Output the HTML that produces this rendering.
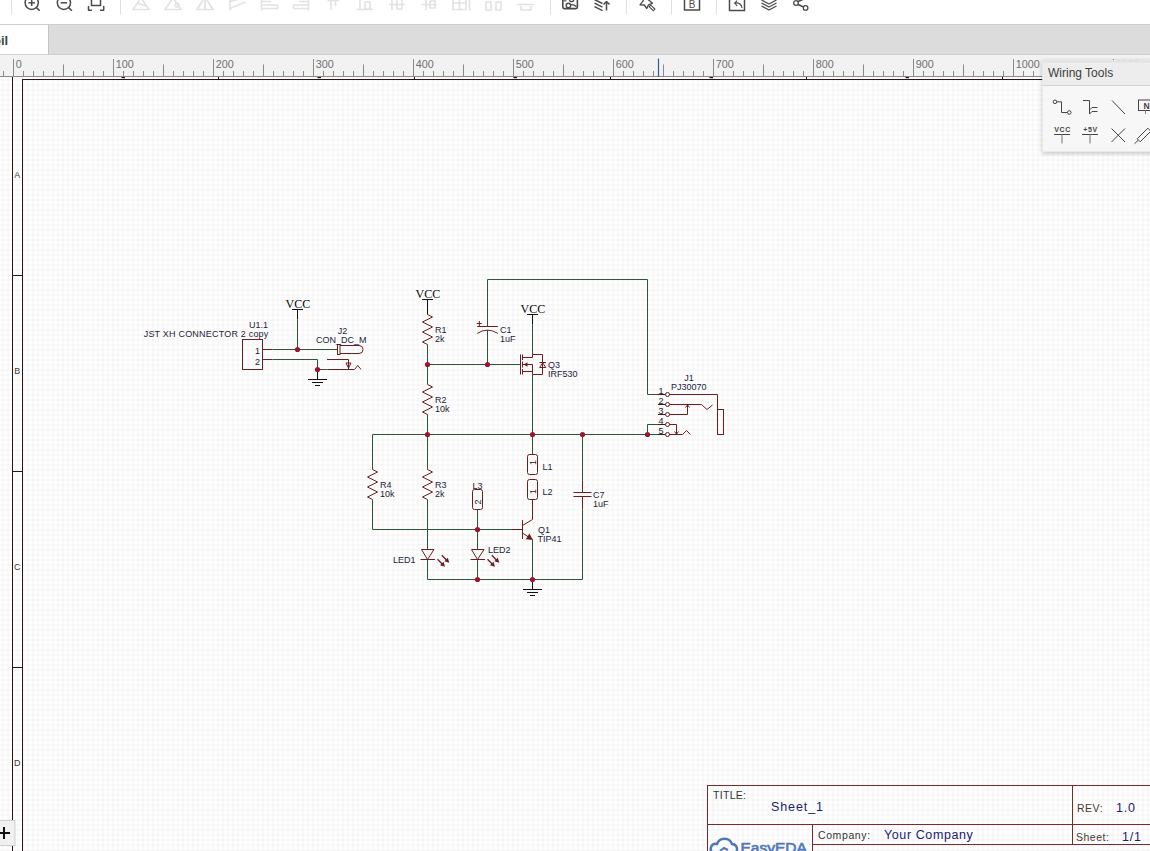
<!DOCTYPE html>
<html><head><meta charset="utf-8"><style>
html,body{margin:0;padding:0;width:1150px;height:851px;overflow:hidden;background:#fff;}
svg{display:block;}
</style></head><body>
<svg width="1150" height="851" viewBox="0 0 1150 851">
<defs><pattern id="grid" x="2.5" y="4.5" width="5" height="5" patternUnits="userSpaceOnUse"><rect x="0" y="0" width="5" height="1" fill="#f3f3f3"/><rect x="0" y="0" width="1" height="5" fill="#f3f3f3"/></pattern></defs>
<rect x="0" y="77" width="1150" height="774" fill="#ffffff"/>
<rect x="0" y="77" width="1150" height="774" fill="url(#grid)"/>
<rect x="12.5" y="69.5" width="2000" height="2000" fill="none" stroke="#2a1414" stroke-width="1"/>
<rect x="22.5" y="79.5" width="2000" height="2000" fill="none" stroke="#2a1414" stroke-width="1"/>
<line x1="218.5" y1="69.5" x2="218.5" y2="79.5" stroke="#2a1414" stroke-width="1"/>
<line x1="414.5" y1="69.5" x2="414.5" y2="79.5" stroke="#2a1414" stroke-width="1"/>
<line x1="610.5" y1="69.5" x2="610.5" y2="79.5" stroke="#2a1414" stroke-width="1"/>
<line x1="806.5" y1="69.5" x2="806.5" y2="79.5" stroke="#2a1414" stroke-width="1"/>
<line x1="1002.5" y1="69.5" x2="1002.5" y2="79.5" stroke="#2a1414" stroke-width="1"/>
<rect x="121.5" y="77" width="3.5" height="1.2" fill="#2a1414"/>
<rect x="317.5" y="77" width="3.5" height="1.2" fill="#2a1414"/>
<rect x="513.5" y="77" width="3.5" height="1.2" fill="#2a1414"/>
<rect x="709.5" y="77" width="3.5" height="1.2" fill="#2a1414"/>
<rect x="905.5" y="77" width="3.5" height="1.2" fill="#2a1414"/>
<rect x="1101.5" y="77" width="3.5" height="1.2" fill="#2a1414"/>
<line x1="12.5" y1="275.5" x2="22.5" y2="275.5" stroke="#2a1414" stroke-width="1"/>
<line x1="12.5" y1="471.5" x2="22.5" y2="471.5" stroke="#2a1414" stroke-width="1"/>
<line x1="12.5" y1="667.5" x2="22.5" y2="667.5" stroke="#2a1414" stroke-width="1"/>
<text x="17.3" y="177.6" style='font-family:"Liberation Sans", sans-serif' font-size="9" fill="#3a3a3a" text-anchor="middle" font-weight="normal" >A</text>
<text x="17.3" y="373.6" style='font-family:"Liberation Sans", sans-serif' font-size="9" fill="#3a3a3a" text-anchor="middle" font-weight="normal" >B</text>
<text x="17.3" y="569.6" style='font-family:"Liberation Sans", sans-serif' font-size="9" fill="#3a3a3a" text-anchor="middle" font-weight="normal" >C</text>
<text x="17.3" y="765.6" style='font-family:"Liberation Sans", sans-serif' font-size="9" fill="#3a3a3a" text-anchor="middle" font-weight="normal" >D</text>
<rect x="242.5" y="339.5" width="20" height="30" fill="none" stroke="#6e1c1c" stroke-width="1"/>
<line x1="262.5" y1="349.5" x2="272.5" y2="349.5" stroke="#6e1c1c" stroke-width="1"/>
<line x1="262.5" y1="359.5" x2="272.5" y2="359.5" stroke="#6e1c1c" stroke-width="1"/>
<text x="255" y="354" style='font-family:"Liberation Sans", sans-serif' font-size="9" fill="#1c1c38" text-anchor="start" font-weight="normal" >1</text>
<text x="255" y="364.5" style='font-family:"Liberation Sans", sans-serif' font-size="9" fill="#1c1c38" text-anchor="start" font-weight="normal" >2</text>
<text x="268" y="328" style='font-family:"Liberation Sans", sans-serif' font-size="9" fill="#1c1c38" text-anchor="end" font-weight="normal" >U1.1</text>
<text x="268.5" y="337" style='font-family:"Liberation Sans", sans-serif' font-size="9" fill="#1c1c38" text-anchor="end" font-weight="normal" letter-spacing="0.2">JST XH CONNECTOR 2 copy</text>
<text x="0" y="0" transform="translate(298.0 308) scale(0.9 1)" style='font-family:"Liberation Serif", serif' font-size="13.4" fill="#0a0a0a" text-anchor="middle">VCC</text>
<line x1="292.0" y1="309.5" x2="303.0" y2="309.5" stroke="#111111" stroke-width="1"/>
<line x1="297.5" y1="309.5" x2="297.5" y2="319.5" stroke="#111111" stroke-width="1"/>
<line x1="297.5" y1="319.5" x2="297.5" y2="349.5" stroke="#2a5836" stroke-width="1"/>
<line x1="272.5" y1="349.5" x2="337.5" y2="349.5" stroke="#2a5836" stroke-width="1"/>
<line x1="272.5" y1="359.5" x2="317.5" y2="359.5" stroke="#2a5836" stroke-width="1"/>
<line x1="317.5" y1="359.5" x2="317.5" y2="369.5" stroke="#2a5836" stroke-width="1"/>
<line x1="317.5" y1="369.5" x2="327.5" y2="369.5" stroke="#2a5836" stroke-width="1"/>
<line x1="317.5" y1="369.5" x2="317.5" y2="379.5" stroke="#111111" stroke-width="1"/>
<line x1="308.0" y1="379.5" x2="327.0" y2="379.5" stroke="#111111" stroke-width="1"/>
<line x1="312.0" y1="382.5" x2="323.0" y2="382.5" stroke="#111111" stroke-width="1"/>
<line x1="315.0" y1="385.5" x2="320.0" y2="385.5" stroke="#111111" stroke-width="1"/>
<rect x="337.5" y="344.5" width="2.5" height="10" fill="none" stroke="#6e1c1c" stroke-width="1"/>
<path d="M340,345.5 H359 A4,4 0 0 1 359,353.5 H340" fill="none" stroke="#6e1c1c" stroke-width="1"/>
<polyline points="327,359.5 348.5,359.5 348.5,369.5" stroke="#6e1c1c" stroke-width="1" fill="none" stroke-linejoin="bevel"/>
<polygon points="346,363 351,363 348.5,368" fill="none" stroke="#6e1c1c" stroke-width="1"/>
<polyline points="327.5,369.5 354.5,369.5 357.8,365.5 361,369.5" stroke="#6e1c1c" stroke-width="1" fill="none" stroke-linejoin="bevel"/>
<text x="342.5" y="333.5" style='font-family:"Liberation Sans", sans-serif' font-size="9" fill="#1c1c38" text-anchor="middle" font-weight="normal" >J2</text>
<text x="316" y="342.5" style='font-family:"Liberation Sans", sans-serif' font-size="9" fill="#1c1c38" text-anchor="start" font-weight="normal" >CON_DC_M</text>
<circle cx="297.5" cy="349.5" r="2.6" fill="#9e1430"/>
<circle cx="317.5" cy="369.5" r="2.6" fill="#9e1430"/>
<text x="0" y="0" transform="translate(428.0 298) scale(0.9 1)" style='font-family:"Liberation Serif", serif' font-size="13.4" fill="#0a0a0a" text-anchor="middle">VCC</text>
<line x1="422.0" y1="299.5" x2="433.0" y2="299.5" stroke="#111111" stroke-width="1"/>
<line x1="427.5" y1="299.5" x2="427.5" y2="314.5" stroke="#111111" stroke-width="1"/>
<polyline points="427.5,314.5 432.5,317.0 422.5,322.0 432.5,327.0 422.5,332.0 432.5,337.0 422.5,342.0 427.5,344.5" stroke="#6e1c1c" stroke-width="1" fill="none" stroke-linejoin="bevel"/>
<line x1="427.5" y1="344.5" x2="427.5" y2="384.5" stroke="#2a5836" stroke-width="1"/>
<polyline points="427.5,384.5 432.5,387.0 422.5,392.0 432.5,397.0 422.5,402.0 432.5,407.0 422.5,412.0 427.5,414.5" stroke="#6e1c1c" stroke-width="1" fill="none" stroke-linejoin="bevel"/>
<line x1="427.5" y1="414.5" x2="427.5" y2="434.5" stroke="#2a5836" stroke-width="1"/>
<text x="435" y="333" style='font-family:"Liberation Sans", sans-serif' font-size="9" fill="#1c1c38" text-anchor="start" font-weight="normal" >R1</text>
<text x="435" y="342" style='font-family:"Liberation Sans", sans-serif' font-size="9" fill="#1c1c38" text-anchor="start" font-weight="normal" >2k</text>
<text x="435" y="403" style='font-family:"Liberation Sans", sans-serif' font-size="9" fill="#1c1c38" text-anchor="start" font-weight="normal" >R2</text>
<text x="435" y="412" style='font-family:"Liberation Sans", sans-serif' font-size="9" fill="#1c1c38" text-anchor="start" font-weight="normal" >10k</text>
<line x1="427.5" y1="364.5" x2="520.5" y2="364.5" stroke="#2a5836" stroke-width="1"/>
<line x1="487.5" y1="279.5" x2="487.5" y2="326.5" stroke="#2a5836" stroke-width="1"/>
<line x1="487.5" y1="330" x2="487.5" y2="364.5" stroke="#2a5836" stroke-width="1"/>
<line x1="477.2" y1="326.5" x2="497.8" y2="326.5" stroke="#6e1c1c" stroke-width="1"/>
<path d="M477.2,333.4 Q487.5,326.8 497.8,333.4" fill="none" stroke="#6e1c1c" stroke-width="1"/>
<line x1="476.8" y1="323.5" x2="481.8" y2="323.5" stroke="#6e1c1c" stroke-width="1"/>
<line x1="479.3" y1="321" x2="479.3" y2="326" stroke="#6e1c1c" stroke-width="1"/>
<text x="500" y="333" style='font-family:"Liberation Sans", sans-serif' font-size="9" fill="#1c1c38" text-anchor="start" font-weight="normal" >C1</text>
<text x="500" y="342" style='font-family:"Liberation Sans", sans-serif' font-size="9" fill="#1c1c38" text-anchor="start" font-weight="normal" >1uF</text>
<circle cx="427.5" cy="364.5" r="2.6" fill="#9e1430"/>
<circle cx="487.5" cy="364.5" r="2.6" fill="#9e1430"/>
<polyline points="487.5,279.5 647.5,279.5 647.5,394.5 658,394.5" stroke="#2a5836" stroke-width="1" fill="none" stroke-linejoin="bevel"/>
<text x="0" y="0" transform="translate(533.0 313) scale(0.9 1)" style='font-family:"Liberation Serif", serif' font-size="13.4" fill="#0a0a0a" text-anchor="middle">VCC</text>
<line x1="527.0" y1="314.5" x2="538.0" y2="314.5" stroke="#111111" stroke-width="1"/>
<line x1="532.5" y1="314.5" x2="532.5" y2="324.5" stroke="#111111" stroke-width="1"/>
<line x1="532.5" y1="324.5" x2="532.5" y2="354.5" stroke="#2a5836" stroke-width="1"/>
<line x1="520.5" y1="354.5" x2="520.5" y2="374.5" stroke="#6e1c1c" stroke-width="1"/>
<line x1="522.5" y1="354.5" x2="522.5" y2="360" stroke="#6e1c1c" stroke-width="1"/>
<line x1="522.5" y1="361.5" x2="522.5" y2="367.5" stroke="#6e1c1c" stroke-width="1"/>
<line x1="522.5" y1="369" x2="522.5" y2="374.5" stroke="#6e1c1c" stroke-width="1"/>
<polyline points="522.5,357.5 532.5,357.5 532.5,354.5 542.5,354.5 542.5,374.5 532.5,374.5" stroke="#6e1c1c" stroke-width="1" fill="none" stroke-linejoin="bevel"/>
<line x1="522.5" y1="371.5" x2="532.5" y2="371.5" stroke="#6e1c1c" stroke-width="1"/>
<polyline points="523,364.5 532.5,364.5 532.5,374.5" stroke="#6e1c1c" stroke-width="1" fill="none" stroke-linejoin="bevel"/>
<line x1="532.5" y1="374.5" x2="532.5" y2="434.5" stroke="#2a5836" stroke-width="1"/>
<polygon points="523.5,364.5 527.5,362.3 527.5,366.7" fill="#6e1c1c"/>
<polygon points="539.7,367.5 545.8,367.5 542.7,362.8" fill="none" stroke="#6e1c1c" stroke-width="1"/>
<line x1="539.5" y1="362.5" x2="546" y2="362.5" stroke="#6e1c1c" stroke-width="1"/>
<text x="548" y="368" style='font-family:"Liberation Sans", sans-serif' font-size="9" fill="#1c1c38" text-anchor="start" font-weight="normal" >Q3</text>
<text x="548" y="377" style='font-family:"Liberation Sans", sans-serif' font-size="9" fill="#1c1c38" text-anchor="start" font-weight="normal" >IRF530</text>
<line x1="372.5" y1="434.5" x2="658" y2="434.5" stroke="#2a5836" stroke-width="1"/>
<line x1="372.5" y1="434.5" x2="372.5" y2="469.5" stroke="#2a5836" stroke-width="1"/>
<polyline points="372.5,469.5 377.5,472.0 367.5,477.0 377.5,482.0 367.5,487.0 377.5,492.0 367.5,497.0 372.5,499.5" stroke="#6e1c1c" stroke-width="1" fill="none" stroke-linejoin="bevel"/>
<polyline points="372.5,499.5 372.5,529.5 512,529.5" stroke="#2a5836" stroke-width="1" fill="none" stroke-linejoin="bevel"/>
<text x="380" y="488" style='font-family:"Liberation Sans", sans-serif' font-size="9" fill="#1c1c38" text-anchor="start" font-weight="normal" >R4</text>
<text x="380" y="497" style='font-family:"Liberation Sans", sans-serif' font-size="9" fill="#1c1c38" text-anchor="start" font-weight="normal" >10k</text>
<line x1="427.5" y1="434.5" x2="427.5" y2="469.5" stroke="#2a5836" stroke-width="1"/>
<polyline points="427.5,469.5 432.5,472.0 422.5,477.0 432.5,482.0 422.5,487.0 432.5,492.0 422.5,497.0 427.5,499.5" stroke="#6e1c1c" stroke-width="1" fill="none" stroke-linejoin="bevel"/>
<line x1="427.5" y1="499.5" x2="427.5" y2="549.5" stroke="#2a5836" stroke-width="1"/>
<text x="435" y="488" style='font-family:"Liberation Sans", sans-serif' font-size="9" fill="#1c1c38" text-anchor="start" font-weight="normal" >R3</text>
<text x="435" y="497" style='font-family:"Liberation Sans", sans-serif' font-size="9" fill="#1c1c38" text-anchor="start" font-weight="normal" >2k</text>
<rect x="472.5" y="489.5" width="10" height="20" rx="2" ry="2" fill="none" stroke="#6e1c1c" stroke-width="1"/>
<text x="477.5" y="502.0" style='font-family:"Liberation Sans", sans-serif' font-size="9" fill="#2a1414" text-anchor="middle" transform="rotate(-90 477.5 502.0)" dy="3.2">2</text>
<text x="477.5" y="488.5" style='font-family:"Liberation Sans", sans-serif' font-size="9" fill="#1c1c38" text-anchor="middle" font-weight="normal" >L3</text>
<line x1="477.5" y1="509.5" x2="477.5" y2="549.5" stroke="#2a5836" stroke-width="1"/>
<circle cx="477.5" cy="529.5" r="2.6" fill="#9e1430"/>
<polygon points="421.5,549.5 434.0,549.5 427.5,559.5" fill="none" stroke="#6e1c1c" stroke-width="1"/>
<line x1="420.5" y1="559.5" x2="435.0" y2="559.5" stroke="#6e1c1c" stroke-width="1"/>
<line x1="437.5" y1="559.2" x2="443.0" y2="564.7" stroke="#6e1c1c" stroke-width="1.3"/>
<polygon points="445.0,566.7 440.0,565.2 443.5,561.7" fill="#6e1c1c"/>
<line x1="441.8" y1="555.3000000000001" x2="447.3" y2="560.8000000000001" stroke="#6e1c1c" stroke-width="1.3"/>
<polygon points="449.3,562.8000000000001 444.3,561.3000000000001 447.8,557.8000000000001" fill="#6e1c1c"/>
<line x1="427.5" y1="559.5" x2="427.5" y2="579.5" stroke="#2a5836" stroke-width="1"/>
<text x="393" y="563" style='font-family:"Liberation Sans", sans-serif' font-size="9" fill="#1c1c38" text-anchor="start" font-weight="normal" >LED1</text>
<polygon points="471.5,549.5 484.0,549.5 477.5,559.5" fill="none" stroke="#6e1c1c" stroke-width="1"/>
<line x1="470.5" y1="559.5" x2="485.0" y2="559.5" stroke="#6e1c1c" stroke-width="1"/>
<line x1="487.5" y1="559.2" x2="493.0" y2="564.7" stroke="#6e1c1c" stroke-width="1.3"/>
<polygon points="495.0,566.7 490.0,565.2 493.5,561.7" fill="#6e1c1c"/>
<line x1="491.8" y1="555.3000000000001" x2="497.3" y2="560.8000000000001" stroke="#6e1c1c" stroke-width="1.3"/>
<polygon points="499.3,562.8000000000001 494.3,561.3000000000001 497.8,557.8000000000001" fill="#6e1c1c"/>
<line x1="477.5" y1="559.5" x2="477.5" y2="579.5" stroke="#2a5836" stroke-width="1"/>
<text x="488" y="553" style='font-family:"Liberation Sans", sans-serif' font-size="9" fill="#1c1c38" text-anchor="start" font-weight="normal" >LED2</text>
<line x1="427.5" y1="579.5" x2="582.5" y2="579.5" stroke="#2a5836" stroke-width="1"/>
<line x1="532.5" y1="434.5" x2="532.5" y2="454.5" stroke="#2a5836" stroke-width="1"/>
<rect x="527.5" y="454.5" width="10" height="20" rx="2" ry="2" fill="none" stroke="#6e1c1c" stroke-width="1"/>
<text x="532.5" y="462.5" style='font-family:"Liberation Sans", sans-serif' font-size="9" fill="#2a1414" text-anchor="middle" transform="rotate(-90 532.5 462.5)" dy="3.2">1</text>
<rect x="527.5" y="479.5" width="10" height="20" rx="2" ry="2" fill="none" stroke="#6e1c1c" stroke-width="1"/>
<text x="532.5" y="491.5" style='font-family:"Liberation Sans", sans-serif' font-size="9" fill="#2a1414" text-anchor="middle" transform="rotate(-90 532.5 491.5)" dy="3.2">1</text>
<text x="542.5" y="470" style='font-family:"Liberation Sans", sans-serif' font-size="9" fill="#1c1c38" text-anchor="start" font-weight="normal" >L1</text>
<text x="542.5" y="495" style='font-family:"Liberation Sans", sans-serif' font-size="9" fill="#1c1c38" text-anchor="start" font-weight="normal" >L2</text>
<polyline points="532.5,499.5 532.5,519.5 522.5,525.5" stroke="#6e1c1c" stroke-width="1" fill="none" stroke-linejoin="bevel"/>
<line x1="522.5" y1="520" x2="522.5" y2="539" stroke="#6e1c1c" stroke-width="1"/>
<line x1="512" y1="529.5" x2="522.5" y2="529.5" stroke="#6e1c1c" stroke-width="1"/>
<line x1="522.5" y1="533" x2="530" y2="538" stroke="#6e1c1c" stroke-width="1"/>
<polygon points="533,540 525.8,539.2 529.4,533.6" fill="#6e1c1c"/>
<line x1="532.5" y1="539.5" x2="532.5" y2="579.5" stroke="#2a5836" stroke-width="1"/>
<text x="538" y="533" style='font-family:"Liberation Sans", sans-serif' font-size="9" fill="#1c1c38" text-anchor="start" font-weight="normal" >Q1</text>
<text x="537.5" y="542" style='font-family:"Liberation Sans", sans-serif' font-size="9" fill="#1c1c38" text-anchor="start" font-weight="normal" >TIP41</text>
<line x1="532.5" y1="579.5" x2="532.5" y2="589.5" stroke="#111111" stroke-width="1"/>
<line x1="523.0" y1="589.5" x2="542.0" y2="589.5" stroke="#111111" stroke-width="1"/>
<line x1="527.0" y1="592.5" x2="538.0" y2="592.5" stroke="#111111" stroke-width="1"/>
<line x1="530.0" y1="595.5" x2="535.0" y2="595.5" stroke="#111111" stroke-width="1"/>
<circle cx="477.5" cy="579.5" r="2.6" fill="#9e1430"/>
<circle cx="532.5" cy="579.5" r="2.6" fill="#9e1430"/>
<line x1="582.5" y1="434.5" x2="582.5" y2="480.5" stroke="#2a5836" stroke-width="1"/>
<line x1="582.5" y1="480.5" x2="582.5" y2="492.5" stroke="#6e1c1c" stroke-width="1"/>
<line x1="582.5" y1="496.5" x2="582.5" y2="509.5" stroke="#6e1c1c" stroke-width="1"/>
<line x1="582.5" y1="509.5" x2="582.5" y2="579.5" stroke="#2a5836" stroke-width="1"/>
<line x1="573.5" y1="492.5" x2="591.5" y2="492.5" stroke="#6e1c1c" stroke-width="1"/>
<line x1="573.5" y1="496.5" x2="591.5" y2="496.5" stroke="#6e1c1c" stroke-width="1"/>
<text x="593" y="497.5" style='font-family:"Liberation Sans", sans-serif' font-size="9" fill="#1c1c38" text-anchor="start" font-weight="normal" >C7</text>
<text x="593" y="506.5" style='font-family:"Liberation Sans", sans-serif' font-size="9" fill="#1c1c38" text-anchor="start" font-weight="normal" >1uF</text>
<circle cx="427.5" cy="434.5" r="2.6" fill="#9e1430"/>
<circle cx="532.5" cy="434.5" r="2.6" fill="#9e1430"/>
<circle cx="582.5" cy="434.5" r="2.6" fill="#9e1430"/>
<circle cx="647.5" cy="434.5" r="2.6" fill="#9e1430"/>
<polyline points="647.5,434.5 647.5,424.5 658,424.5" stroke="#2a5836" stroke-width="1" fill="none" stroke-linejoin="bevel"/>
<line x1="658" y1="394.5" x2="665.5" y2="394.5" stroke="#3a1a1a" stroke-width="1"/>
<circle cx="667.5" cy="394.5" r="2" fill="none" stroke="#6e1c1c" stroke-width="1"/>
<text x="658.5" y="393.7" style='font-family:"Liberation Sans", sans-serif' font-size="9" fill="#222" text-anchor="start" font-weight="normal" >1</text>
<line x1="658" y1="404.5" x2="665.5" y2="404.5" stroke="#3a1a1a" stroke-width="1"/>
<circle cx="667.5" cy="404.5" r="2" fill="none" stroke="#6e1c1c" stroke-width="1"/>
<text x="658.5" y="403.7" style='font-family:"Liberation Sans", sans-serif' font-size="9" fill="#222" text-anchor="start" font-weight="normal" >2</text>
<line x1="658" y1="414.5" x2="665.5" y2="414.5" stroke="#3a1a1a" stroke-width="1"/>
<circle cx="667.5" cy="414.5" r="2" fill="none" stroke="#6e1c1c" stroke-width="1"/>
<text x="658.5" y="413.7" style='font-family:"Liberation Sans", sans-serif' font-size="9" fill="#222" text-anchor="start" font-weight="normal" >3</text>
<line x1="658" y1="424.5" x2="665.5" y2="424.5" stroke="#3a1a1a" stroke-width="1"/>
<circle cx="667.5" cy="424.5" r="2" fill="none" stroke="#6e1c1c" stroke-width="1"/>
<text x="658.5" y="423.7" style='font-family:"Liberation Sans", sans-serif' font-size="9" fill="#222" text-anchor="start" font-weight="normal" >4</text>
<line x1="658" y1="434.5" x2="665.5" y2="434.5" stroke="#3a1a1a" stroke-width="1"/>
<circle cx="667.5" cy="434.5" r="2" fill="none" stroke="#6e1c1c" stroke-width="1"/>
<text x="658.5" y="433.7" style='font-family:"Liberation Sans", sans-serif' font-size="9" fill="#222" text-anchor="start" font-weight="normal" >5</text>
<polyline points="669.5,394.5 717.5,394.5 717.5,434.5" stroke="#6e1c1c" stroke-width="1" fill="none" stroke-linejoin="bevel"/>
<rect x="717.5" y="409.5" width="6" height="25" fill="none" stroke="#6e1c1c" stroke-width="1"/>
<polyline points="669.5,404.5 701.5,404.5 707,409.5 712.5,405" stroke="#6e1c1c" stroke-width="1" fill="none" stroke-linejoin="bevel"/>
<polyline points="669.5,414.5 687.5,414.5 687.5,405" stroke="#6e1c1c" stroke-width="1" fill="none" stroke-linejoin="bevel"/>
<polyline points="685.5,407.5 687.5,405 689.5,407.5" stroke="#6e1c1c" stroke-width="1" fill="none" stroke-linejoin="bevel"/>
<polyline points="669.5,424.5 676.5,424.5 676.5,434" stroke="#6e1c1c" stroke-width="1" fill="none" stroke-linejoin="bevel"/>
<polyline points="674.5,431.5 676.5,434 678.5,431.5" stroke="#6e1c1c" stroke-width="1" fill="none" stroke-linejoin="bevel"/>
<polyline points="669.5,434.5 682.5,434.5 686.6,430.5 690.3,434.5" stroke="#6e1c1c" stroke-width="1" fill="none" stroke-linejoin="bevel"/>
<text x="689" y="381" style='font-family:"Liberation Sans", sans-serif' font-size="9" fill="#1c1c38" text-anchor="middle" font-weight="normal" >J1</text>
<text x="671" y="390" style='font-family:"Liberation Sans", sans-serif' font-size="9" fill="#1c1c38" text-anchor="start" font-weight="normal" >PJ30070</text>
<rect x="707.5" y="785.5" width="600" height="200" fill="none" stroke="#7a2a2a" stroke-width="1"/>
<line x1="707.5" y1="824.5" x2="1200" y2="824.5" stroke="#7a2a2a" stroke-width="1"/>
<line x1="812.5" y1="824.5" x2="812.5" y2="900" stroke="#7a2a2a" stroke-width="1"/>
<line x1="812.5" y1="844.5" x2="1200" y2="844.5" stroke="#7a2a2a" stroke-width="1"/>
<line x1="1072.5" y1="785.5" x2="1072.5" y2="844.5" stroke="#7a2a2a" stroke-width="1"/>
<text x="713" y="799" style='font-family:"Liberation Sans", sans-serif' font-size="10.5" fill="#333" text-anchor="start" font-weight="normal" letter-spacing="0.3">TITLE:</text>
<text x="771" y="811" style='font-family:"Liberation Sans", sans-serif' font-size="12.5" fill="#202070" text-anchor="start" font-weight="normal" letter-spacing="0.9">Sheet_1</text>
<text x="818" y="839" style='font-family:"Liberation Sans", sans-serif' font-size="10.5" fill="#333" text-anchor="start" font-weight="normal" letter-spacing="0.6">Company:</text>
<text x="884" y="839" style='font-family:"Liberation Sans", sans-serif' font-size="12.5" fill="#202070" text-anchor="start" font-weight="normal" letter-spacing="0.6">Your Company</text>
<text x="1077" y="812" style='font-family:"Liberation Sans", sans-serif' font-size="10.5" fill="#4a3a2a" text-anchor="start" font-weight="normal" letter-spacing="0.5">REV:</text>
<text x="1116" y="812" style='font-family:"Liberation Sans", sans-serif' font-size="12.5" fill="#202070" text-anchor="start" font-weight="normal" letter-spacing="0.8">1.0</text>
<text x="1076" y="841" style='font-family:"Liberation Sans", sans-serif' font-size="10.5" fill="#4a3a2a" text-anchor="start" font-weight="normal" letter-spacing="0.5">Sheet:</text>
<text x="1122" y="841" style='font-family:"Liberation Sans", sans-serif' font-size="12.5" fill="#202070" text-anchor="start" font-weight="normal" letter-spacing="0.8">1/1</text>
<g fill="none" stroke="#4f76b8" stroke-width="2.4"><path d="M713,853 a5,5 0 0 1 4,-9 a8,8 0 0 1 15,0 a5,5 0 0 1 3,9"/><path d="M720,851 l4,-3 l4,2" stroke-width="2"/></g>
<text x="740.5" y="853" style='font-family:"Liberation Sans", sans-serif' font-size="15.5" fill="#5279bb" text-anchor="start" font-weight="normal" stroke="#5279bb" stroke-width="0.7">EasyEDA</text>
<rect x="0" y="54.5" width="1150" height="22.5" fill="#f2f2f2"/>
<line x1="3.5" y1="71" x2="3.5" y2="77" stroke="#8a8a8a" stroke-width="1"/>
<line x1="13.5" y1="59" x2="13.5" y2="77" stroke="#8a8a8a" stroke-width="1"/>
<text x="15.7" y="67.9" style='font-family:"Liberation Sans", sans-serif' font-size="10.8" fill="#707070" text-anchor="start" font-weight="normal" >0</text>
<line x1="23.5" y1="71" x2="23.5" y2="77" stroke="#8a8a8a" stroke-width="1"/>
<line x1="33.5" y1="71" x2="33.5" y2="77" stroke="#8a8a8a" stroke-width="1"/>
<line x1="43.5" y1="71" x2="43.5" y2="77" stroke="#8a8a8a" stroke-width="1"/>
<line x1="53.5" y1="71" x2="53.5" y2="77" stroke="#8a8a8a" stroke-width="1"/>
<line x1="63.5" y1="64.5" x2="63.5" y2="77" stroke="#8a8a8a" stroke-width="1"/>
<line x1="73.5" y1="71" x2="73.5" y2="77" stroke="#8a8a8a" stroke-width="1"/>
<line x1="83.5" y1="71" x2="83.5" y2="77" stroke="#8a8a8a" stroke-width="1"/>
<line x1="93.5" y1="71" x2="93.5" y2="77" stroke="#8a8a8a" stroke-width="1"/>
<line x1="103.5" y1="71" x2="103.5" y2="77" stroke="#8a8a8a" stroke-width="1"/>
<line x1="113.5" y1="59" x2="113.5" y2="77" stroke="#8a8a8a" stroke-width="1"/>
<text x="115.7" y="67.9" style='font-family:"Liberation Sans", sans-serif' font-size="10.8" fill="#707070" text-anchor="start" font-weight="normal" >100</text>
<line x1="123.5" y1="71" x2="123.5" y2="77" stroke="#8a8a8a" stroke-width="1"/>
<line x1="133.5" y1="71" x2="133.5" y2="77" stroke="#8a8a8a" stroke-width="1"/>
<line x1="143.5" y1="71" x2="143.5" y2="77" stroke="#8a8a8a" stroke-width="1"/>
<line x1="153.5" y1="71" x2="153.5" y2="77" stroke="#8a8a8a" stroke-width="1"/>
<line x1="163.5" y1="64.5" x2="163.5" y2="77" stroke="#8a8a8a" stroke-width="1"/>
<line x1="173.5" y1="71" x2="173.5" y2="77" stroke="#8a8a8a" stroke-width="1"/>
<line x1="183.5" y1="71" x2="183.5" y2="77" stroke="#8a8a8a" stroke-width="1"/>
<line x1="193.5" y1="71" x2="193.5" y2="77" stroke="#8a8a8a" stroke-width="1"/>
<line x1="203.5" y1="71" x2="203.5" y2="77" stroke="#8a8a8a" stroke-width="1"/>
<line x1="213.5" y1="59" x2="213.5" y2="77" stroke="#8a8a8a" stroke-width="1"/>
<text x="215.7" y="67.9" style='font-family:"Liberation Sans", sans-serif' font-size="10.8" fill="#707070" text-anchor="start" font-weight="normal" >200</text>
<line x1="223.5" y1="71" x2="223.5" y2="77" stroke="#8a8a8a" stroke-width="1"/>
<line x1="233.5" y1="71" x2="233.5" y2="77" stroke="#8a8a8a" stroke-width="1"/>
<line x1="243.5" y1="71" x2="243.5" y2="77" stroke="#8a8a8a" stroke-width="1"/>
<line x1="253.5" y1="71" x2="253.5" y2="77" stroke="#8a8a8a" stroke-width="1"/>
<line x1="263.5" y1="64.5" x2="263.5" y2="77" stroke="#8a8a8a" stroke-width="1"/>
<line x1="273.5" y1="71" x2="273.5" y2="77" stroke="#8a8a8a" stroke-width="1"/>
<line x1="283.5" y1="71" x2="283.5" y2="77" stroke="#8a8a8a" stroke-width="1"/>
<line x1="293.5" y1="71" x2="293.5" y2="77" stroke="#8a8a8a" stroke-width="1"/>
<line x1="303.5" y1="71" x2="303.5" y2="77" stroke="#8a8a8a" stroke-width="1"/>
<line x1="313.5" y1="59" x2="313.5" y2="77" stroke="#8a8a8a" stroke-width="1"/>
<text x="315.7" y="67.9" style='font-family:"Liberation Sans", sans-serif' font-size="10.8" fill="#707070" text-anchor="start" font-weight="normal" >300</text>
<line x1="323.5" y1="71" x2="323.5" y2="77" stroke="#8a8a8a" stroke-width="1"/>
<line x1="333.5" y1="71" x2="333.5" y2="77" stroke="#8a8a8a" stroke-width="1"/>
<line x1="343.5" y1="71" x2="343.5" y2="77" stroke="#8a8a8a" stroke-width="1"/>
<line x1="353.5" y1="71" x2="353.5" y2="77" stroke="#8a8a8a" stroke-width="1"/>
<line x1="363.5" y1="64.5" x2="363.5" y2="77" stroke="#8a8a8a" stroke-width="1"/>
<line x1="373.5" y1="71" x2="373.5" y2="77" stroke="#8a8a8a" stroke-width="1"/>
<line x1="383.5" y1="71" x2="383.5" y2="77" stroke="#8a8a8a" stroke-width="1"/>
<line x1="393.5" y1="71" x2="393.5" y2="77" stroke="#8a8a8a" stroke-width="1"/>
<line x1="403.5" y1="71" x2="403.5" y2="77" stroke="#8a8a8a" stroke-width="1"/>
<line x1="413.5" y1="59" x2="413.5" y2="77" stroke="#8a8a8a" stroke-width="1"/>
<text x="415.7" y="67.9" style='font-family:"Liberation Sans", sans-serif' font-size="10.8" fill="#707070" text-anchor="start" font-weight="normal" >400</text>
<line x1="423.5" y1="71" x2="423.5" y2="77" stroke="#8a8a8a" stroke-width="1"/>
<line x1="433.5" y1="71" x2="433.5" y2="77" stroke="#8a8a8a" stroke-width="1"/>
<line x1="443.5" y1="71" x2="443.5" y2="77" stroke="#8a8a8a" stroke-width="1"/>
<line x1="453.5" y1="71" x2="453.5" y2="77" stroke="#8a8a8a" stroke-width="1"/>
<line x1="463.5" y1="64.5" x2="463.5" y2="77" stroke="#8a8a8a" stroke-width="1"/>
<line x1="473.5" y1="71" x2="473.5" y2="77" stroke="#8a8a8a" stroke-width="1"/>
<line x1="483.5" y1="71" x2="483.5" y2="77" stroke="#8a8a8a" stroke-width="1"/>
<line x1="493.5" y1="71" x2="493.5" y2="77" stroke="#8a8a8a" stroke-width="1"/>
<line x1="503.5" y1="71" x2="503.5" y2="77" stroke="#8a8a8a" stroke-width="1"/>
<line x1="513.5" y1="59" x2="513.5" y2="77" stroke="#8a8a8a" stroke-width="1"/>
<text x="515.7" y="67.9" style='font-family:"Liberation Sans", sans-serif' font-size="10.8" fill="#707070" text-anchor="start" font-weight="normal" >500</text>
<line x1="523.5" y1="71" x2="523.5" y2="77" stroke="#8a8a8a" stroke-width="1"/>
<line x1="533.5" y1="71" x2="533.5" y2="77" stroke="#8a8a8a" stroke-width="1"/>
<line x1="543.5" y1="71" x2="543.5" y2="77" stroke="#8a8a8a" stroke-width="1"/>
<line x1="553.5" y1="71" x2="553.5" y2="77" stroke="#8a8a8a" stroke-width="1"/>
<line x1="563.5" y1="64.5" x2="563.5" y2="77" stroke="#8a8a8a" stroke-width="1"/>
<line x1="573.5" y1="71" x2="573.5" y2="77" stroke="#8a8a8a" stroke-width="1"/>
<line x1="583.5" y1="71" x2="583.5" y2="77" stroke="#8a8a8a" stroke-width="1"/>
<line x1="593.5" y1="71" x2="593.5" y2="77" stroke="#8a8a8a" stroke-width="1"/>
<line x1="603.5" y1="71" x2="603.5" y2="77" stroke="#8a8a8a" stroke-width="1"/>
<line x1="613.5" y1="59" x2="613.5" y2="77" stroke="#8a8a8a" stroke-width="1"/>
<text x="615.7" y="67.9" style='font-family:"Liberation Sans", sans-serif' font-size="10.8" fill="#707070" text-anchor="start" font-weight="normal" >600</text>
<line x1="623.5" y1="71" x2="623.5" y2="77" stroke="#8a8a8a" stroke-width="1"/>
<line x1="633.5" y1="71" x2="633.5" y2="77" stroke="#8a8a8a" stroke-width="1"/>
<line x1="643.5" y1="71" x2="643.5" y2="77" stroke="#8a8a8a" stroke-width="1"/>
<line x1="653.5" y1="71" x2="653.5" y2="77" stroke="#8a8a8a" stroke-width="1"/>
<line x1="663.5" y1="64.5" x2="663.5" y2="77" stroke="#8a8a8a" stroke-width="1"/>
<line x1="673.5" y1="71" x2="673.5" y2="77" stroke="#8a8a8a" stroke-width="1"/>
<line x1="683.5" y1="71" x2="683.5" y2="77" stroke="#8a8a8a" stroke-width="1"/>
<line x1="693.5" y1="71" x2="693.5" y2="77" stroke="#8a8a8a" stroke-width="1"/>
<line x1="703.5" y1="71" x2="703.5" y2="77" stroke="#8a8a8a" stroke-width="1"/>
<line x1="713.5" y1="59" x2="713.5" y2="77" stroke="#8a8a8a" stroke-width="1"/>
<text x="715.7" y="67.9" style='font-family:"Liberation Sans", sans-serif' font-size="10.8" fill="#707070" text-anchor="start" font-weight="normal" >700</text>
<line x1="723.5" y1="71" x2="723.5" y2="77" stroke="#8a8a8a" stroke-width="1"/>
<line x1="733.5" y1="71" x2="733.5" y2="77" stroke="#8a8a8a" stroke-width="1"/>
<line x1="743.5" y1="71" x2="743.5" y2="77" stroke="#8a8a8a" stroke-width="1"/>
<line x1="753.5" y1="71" x2="753.5" y2="77" stroke="#8a8a8a" stroke-width="1"/>
<line x1="763.5" y1="64.5" x2="763.5" y2="77" stroke="#8a8a8a" stroke-width="1"/>
<line x1="773.5" y1="71" x2="773.5" y2="77" stroke="#8a8a8a" stroke-width="1"/>
<line x1="783.5" y1="71" x2="783.5" y2="77" stroke="#8a8a8a" stroke-width="1"/>
<line x1="793.5" y1="71" x2="793.5" y2="77" stroke="#8a8a8a" stroke-width="1"/>
<line x1="803.5" y1="71" x2="803.5" y2="77" stroke="#8a8a8a" stroke-width="1"/>
<line x1="813.5" y1="59" x2="813.5" y2="77" stroke="#8a8a8a" stroke-width="1"/>
<text x="815.7" y="67.9" style='font-family:"Liberation Sans", sans-serif' font-size="10.8" fill="#707070" text-anchor="start" font-weight="normal" >800</text>
<line x1="823.5" y1="71" x2="823.5" y2="77" stroke="#8a8a8a" stroke-width="1"/>
<line x1="833.5" y1="71" x2="833.5" y2="77" stroke="#8a8a8a" stroke-width="1"/>
<line x1="843.5" y1="71" x2="843.5" y2="77" stroke="#8a8a8a" stroke-width="1"/>
<line x1="853.5" y1="71" x2="853.5" y2="77" stroke="#8a8a8a" stroke-width="1"/>
<line x1="863.5" y1="64.5" x2="863.5" y2="77" stroke="#8a8a8a" stroke-width="1"/>
<line x1="873.5" y1="71" x2="873.5" y2="77" stroke="#8a8a8a" stroke-width="1"/>
<line x1="883.5" y1="71" x2="883.5" y2="77" stroke="#8a8a8a" stroke-width="1"/>
<line x1="893.5" y1="71" x2="893.5" y2="77" stroke="#8a8a8a" stroke-width="1"/>
<line x1="903.5" y1="71" x2="903.5" y2="77" stroke="#8a8a8a" stroke-width="1"/>
<line x1="913.5" y1="59" x2="913.5" y2="77" stroke="#8a8a8a" stroke-width="1"/>
<text x="915.7" y="67.9" style='font-family:"Liberation Sans", sans-serif' font-size="10.8" fill="#707070" text-anchor="start" font-weight="normal" >900</text>
<line x1="923.5" y1="71" x2="923.5" y2="77" stroke="#8a8a8a" stroke-width="1"/>
<line x1="933.5" y1="71" x2="933.5" y2="77" stroke="#8a8a8a" stroke-width="1"/>
<line x1="943.5" y1="71" x2="943.5" y2="77" stroke="#8a8a8a" stroke-width="1"/>
<line x1="953.5" y1="71" x2="953.5" y2="77" stroke="#8a8a8a" stroke-width="1"/>
<line x1="963.5" y1="64.5" x2="963.5" y2="77" stroke="#8a8a8a" stroke-width="1"/>
<line x1="973.5" y1="71" x2="973.5" y2="77" stroke="#8a8a8a" stroke-width="1"/>
<line x1="983.5" y1="71" x2="983.5" y2="77" stroke="#8a8a8a" stroke-width="1"/>
<line x1="993.5" y1="71" x2="993.5" y2="77" stroke="#8a8a8a" stroke-width="1"/>
<line x1="1003.5" y1="71" x2="1003.5" y2="77" stroke="#8a8a8a" stroke-width="1"/>
<line x1="1013.5" y1="59" x2="1013.5" y2="77" stroke="#8a8a8a" stroke-width="1"/>
<text x="1015.7" y="67.9" style='font-family:"Liberation Sans", sans-serif' font-size="10.8" fill="#707070" text-anchor="start" font-weight="normal" >1000</text>
<line x1="1023.5" y1="71" x2="1023.5" y2="77" stroke="#8a8a8a" stroke-width="1"/>
<line x1="1033.5" y1="71" x2="1033.5" y2="77" stroke="#8a8a8a" stroke-width="1"/>
<line x1="1043.5" y1="71" x2="1043.5" y2="77" stroke="#8a8a8a" stroke-width="1"/>
<line x1="1053.5" y1="71" x2="1053.5" y2="77" stroke="#8a8a8a" stroke-width="1"/>
<line x1="1063.5" y1="64.5" x2="1063.5" y2="77" stroke="#8a8a8a" stroke-width="1"/>
<line x1="1073.5" y1="71" x2="1073.5" y2="77" stroke="#8a8a8a" stroke-width="1"/>
<line x1="1083.5" y1="71" x2="1083.5" y2="77" stroke="#8a8a8a" stroke-width="1"/>
<line x1="1093.5" y1="71" x2="1093.5" y2="77" stroke="#8a8a8a" stroke-width="1"/>
<line x1="1103.5" y1="71" x2="1103.5" y2="77" stroke="#8a8a8a" stroke-width="1"/>
<line x1="1113.5" y1="59" x2="1113.5" y2="77" stroke="#8a8a8a" stroke-width="1"/>
<text x="1115.7" y="67.9" style='font-family:"Liberation Sans", sans-serif' font-size="10.8" fill="#707070" text-anchor="start" font-weight="normal" >1100</text>
<line x1="1123.5" y1="71" x2="1123.5" y2="77" stroke="#8a8a8a" stroke-width="1"/>
<line x1="1133.5" y1="71" x2="1133.5" y2="77" stroke="#8a8a8a" stroke-width="1"/>
<line x1="1143.5" y1="71" x2="1143.5" y2="77" stroke="#8a8a8a" stroke-width="1"/>
<line x1="0" y1="76.5" x2="1150" y2="76.5" stroke="#8a8a8a" stroke-width="1"/>
<line x1="658.5" y1="58.5" x2="658.5" y2="77" stroke="#2e5c8c" stroke-width="1.2"/>
<rect x="0" y="24" width="1150" height="31" fill="#dcdcdc"/>
<line x1="0" y1="24.5" x2="1150" y2="24.5" stroke="#cfcfcf" stroke-width="1"/>
<rect x="0" y="25" width="48" height="29" fill="#ffffff"/>
<line x1="48.5" y1="25" x2="48.5" y2="54.5" stroke="#c4c4c4" stroke-width="1"/>
<line x1="0" y1="54.5" x2="1150" y2="54.5" stroke="#d0d0d0" stroke-width="1"/>
<text x="-7" y="44.5" style='font-family:"Liberation Sans", sans-serif' font-size="13" fill="#3d4a3d" text-anchor="start" font-weight="bold" >oil</text>
<rect x="0" y="0" width="1150" height="24" fill="#ffffff"/>
<line x1="11.5" y1="0" x2="11.5" y2="14.5" stroke="#e0e0e0" stroke-width="1"/>
<line x1="120.5" y1="0" x2="120.5" y2="14.5" stroke="#e0e0e0" stroke-width="1"/>
<line x1="550.5" y1="0" x2="550.5" y2="14.5" stroke="#e0e0e0" stroke-width="1"/>
<line x1="626.5" y1="0" x2="626.5" y2="14.5" stroke="#e0e0e0" stroke-width="1"/>
<line x1="671.5" y1="0" x2="671.5" y2="14.5" stroke="#e0e0e0" stroke-width="1"/>
<line x1="716.5" y1="0" x2="716.5" y2="14.5" stroke="#e0e0e0" stroke-width="1"/>
<circle cx="31.7" cy="2.8" r="6.6" fill="none" stroke="#4a4a4a" stroke-width="1.5"/>
<line x1="28.5" y1="2.8" x2="34.9" y2="2.8" stroke="#4a4a4a" stroke-width="1.5"/>
<line x1="31.7" y1="-0.4" x2="31.7" y2="6" stroke="#4a4a4a" stroke-width="1.5"/>
<line x1="36.5" y1="7.6" x2="39.7" y2="10.8" stroke="#4a4a4a" stroke-width="1.5"/>
<circle cx="63.9" cy="2.8" r="6.6" fill="none" stroke="#4a4a4a" stroke-width="1.5"/>
<line x1="60.699999999999996" y1="2.8" x2="67.1" y2="2.8" stroke="#4a4a4a" stroke-width="1.5"/>
<line x1="68.7" y1="7.6" x2="71.9" y2="10.8" stroke="#4a4a4a" stroke-width="1.5"/>
<rect x="91.5" y="-3" width="9" height="8.5" fill="none" stroke="#4a4a4a" stroke-width="1.5"/>
<polyline points="88.5,6 88.5,10.2 92,10.2" stroke="#4a4a4a" stroke-width="1.5" fill="none" stroke-linejoin="bevel"/>
<polyline points="100,10.2 103.7,10.2 103.7,6" stroke="#4a4a4a" stroke-width="1.5" fill="none" stroke-linejoin="bevel"/>
<path d="M133,9.5 L141,-2 L149,9.5 Z M137,3 L146,6" fill="none" stroke="#e2e2e2" stroke-width="1.6"/>
<path d="M165,9.5 L173,-2 L181,9.5 Z M177,3 a2,2 0 1 0 0.1,0" fill="none" stroke="#e2e2e2" stroke-width="1.6"/>
<path d="M197,9.5 L205,-3 L213,9.5 Z M205,-3 V9.5" fill="none" stroke="#e2e2e2" stroke-width="1.6"/>
<path d="M230,10.5 V-2 M230,1.5 L245.5,-2.5 M230,8.5 L245.5,2" fill="none" stroke="#e2e2e2" stroke-width="1.6"/>
<path d="M261.5,-2 V10.5 M262,1.5 H271 M262,5 H277.5 V8.5 H262" fill="none" stroke="#e2e2e2" stroke-width="1.6"/>
<path d="M308.5,-2 V10.5 M308,1.5 H299 M308,5 H293.5 V8.5 H308" fill="none" stroke="#e2e2e2" stroke-width="1.6"/>
<path d="M327.5,0.5 H339 M331,0.5 V10 M335.5,0.5 V6" fill="none" stroke="#e2e2e2" stroke-width="1.6"/>
<path d="M356.5,9.5 H373 M360,-2 V9 M365,2 V9 H370 V2 H365" fill="none" stroke="#e2e2e2" stroke-width="1.6"/>
<path d="M389,4.5 H405 M392,-1 V10 M397,-1 V9 H402 V-1" fill="none" stroke="#e2e2e2" stroke-width="1.6"/>
<path d="M421.5,4.5 H436.5 M426,-1 V10 M430,1 V8 H435 V1 H430" fill="none" stroke="#e2e2e2" stroke-width="1.6"/>
<path d="M453,-3 V9.5 H466 V-3 M453,3 H466 M459.5,-3 V9.5 M469.5,-3 V10.5" fill="none" stroke="#e2e2e2" stroke-width="1.6"/>
<path d="M486,2 V10 H491 V2 Z M496,2 V10 H501 V2 Z M486,-1 H501" fill="none" stroke="#e2e2e2" stroke-width="1.6"/>
<path d="M517,-1 H534 M517,4.5 H534 M521,6 V10 H531 V6" fill="none" stroke="#e2e2e2" stroke-width="1.6"/>
<rect x="562.8" y="-3" width="14.6" height="11.6" rx="1.5" fill="none" stroke="#4a4a4a" stroke-width="1.6"/>
<circle cx="568.4" cy="5.5" r="2.2" fill="none" stroke="#4a4a4a" stroke-width="1.4"/>
<circle cx="571.6" cy="-0.5" r="2.2" fill="none" stroke="#4a4a4a" stroke-width="1.4"/>
<circle cx="565" cy="0" r="1.8" fill="#4a4a4a" opacity="0.7"/>
<path d="M570.6,4.6 Q574,4.3 576.5,6.5" fill="none" stroke="#4a4a4a" stroke-width="1.3"/>
<line x1="594.5" y1="-0.5" x2="602.5" y2="3.5" stroke="#4a4a4a" stroke-width="1.4"/>
<line x1="594.5" y1="3.1" x2="602.5" y2="7.1" stroke="#4a4a4a" stroke-width="1.4"/>
<line x1="594.5" y1="6.7" x2="602.5" y2="10.7" stroke="#4a4a4a" stroke-width="1.4"/>
<line x1="606.5" y1="2" x2="606.5" y2="10.5" stroke="#4a4a4a" stroke-width="1.5"/>
<polyline points="603.5,4.5 606.5,1.5 609.5,4.5" stroke="#4a4a4a" stroke-width="1.5" fill="none" stroke-linejoin="bevel"/>
<path d="M640,4.8 L643,1.2 L644,-4 L648,-0.5 L652.6,3.2 L648.5,4.8 L646.8,8.5 L644.2,5 Z" fill="none" stroke="#4a4a4a" stroke-width="1.3" stroke-linejoin="round"/>
<line x1="649.5" y1="5.5" x2="654.5" y2="10.3" stroke="#4a4a4a" stroke-width="3.4"/>
<line x1="650.3" y1="6.3" x2="653.8" y2="9.6" stroke="#fff" stroke-width="1.2"/>
<rect x="684.5" y="-4" width="15" height="14" fill="none" stroke="#4a4a4a" stroke-width="1.5"/>
<text x="692" y="8" style='font-family:"Liberation Sans", sans-serif' font-size="10" fill="#4a4a4a" text-anchor="middle" font-weight="normal" >B</text>
<rect x="729.5" y="-3" width="15" height="13.5" fill="none" stroke="#4a4a4a" stroke-width="1.5"/>
<path d="M742,8 Q741,2 735,3 L737,0.5 M735,3 L737,6" fill="none" stroke="#4a4a4a" stroke-width="1.2"/>
<polyline points="761.5,0 769,4 776.5,0" stroke="#4a4a4a" stroke-width="1.3" fill="none" stroke-linejoin="bevel"/>
<polyline points="761.5,3 769,7 776.5,3" stroke="#4a4a4a" stroke-width="1.3" fill="none" stroke-linejoin="bevel"/>
<polyline points="761.5,6 769,10 776.5,6" stroke="#4a4a4a" stroke-width="1.3" fill="none" stroke-linejoin="bevel"/>
<circle cx="796" cy="3" r="2.3" fill="none" stroke="#4a4a4a" stroke-width="1.3"/>
<circle cx="805.6" cy="7.9" r="2.3" fill="none" stroke="#4a4a4a" stroke-width="1.3"/>
<line x1="798" y1="4.5" x2="803.5" y2="7" stroke="#4a4a4a" stroke-width="1.5"/>
<line x1="798" y1="1.5" x2="804" y2="-1" stroke="#4a4a4a" stroke-width="1.5"/>
<defs><filter id="psh" x="-20%" y="-20%" width="140%" height="140%"><feGaussianBlur stdDeviation="2.2"/></filter></defs>
<rect x="1042" y="61" width="130" height="92.5" fill="#000" opacity="0.22" filter="url(#psh)"/>
<rect x="1042.5" y="60.5" width="120" height="91.2" fill="#f7f7f7"/>
<rect x="1042.5" y="60.5" width="120" height="24.5" fill="#ededed"/>
<rect x="1042.5" y="60.5" width="120" height="2" fill="#e2e2e2"/>
<line x1="1043" y1="85.5" x2="1150" y2="85.5" stroke="#d4d4d4" stroke-width="1"/>
<text x="1048" y="77" style='font-family:"Liberation Sans", sans-serif' font-size="12" fill="#3c3c3c" text-anchor="start" font-weight="normal" >Wiring Tools</text>
<circle cx="1055" cy="101.8" r="1.8" fill="none" stroke="#444" stroke-width="1"/>
<polyline points="1056.8,101.8 1061.5,101.8 1061.5,112.5 1067.5,112.5" stroke="#444" stroke-width="1" fill="none" stroke-linejoin="bevel"/>
<circle cx="1069.3" cy="112.5" r="1.8" fill="none" stroke="#444" stroke-width="1"/>
<polyline points="1083,100.5 1089.5,100.5 1089.5,114" stroke="#444" stroke-width="1" fill="none" stroke-linejoin="bevel"/>
<polyline points="1089.5,110 1092,107.5 1097.5,107.5" stroke="#444" stroke-width="1" fill="none" stroke-linejoin="bevel"/>
<polyline points="1089.5,114 1092,111.5 1097.5,111.5" stroke="#444" stroke-width="1" fill="none" stroke-linejoin="bevel"/>
<line x1="1112" y1="100.5" x2="1125" y2="114" stroke="#444" stroke-width="1"/>
<rect x="1138.5" y="100" width="20" height="10.5" fill="none" stroke="#444" stroke-width="1"/>
<text x="1143.5" y="109" style='font-family:"Liberation Sans", sans-serif' font-size="8.5" fill="#444" text-anchor="start" font-weight="bold" >N</text>
<line x1="1145.5" y1="110.5" x2="1145.5" y2="114" stroke="#888" stroke-width="1"/>
<text x="1062.6" y="131.6" style='font-family:"Liberation Sans", sans-serif' font-size="7" fill="#444" text-anchor="middle" font-weight="bold" letter-spacing="0.7">VCC</text>
<line x1="1054" y1="134.5" x2="1070" y2="134.5" stroke="#444" stroke-width="1"/>
<line x1="1062" y1="134.5" x2="1062" y2="143.5" stroke="#888" stroke-width="1.2"/>
<text x="1090.6" y="131.6" style='font-family:"Liberation Sans", sans-serif' font-size="7" fill="#444" text-anchor="middle" font-weight="bold" letter-spacing="0.7">+5V</text>
<line x1="1082" y1="134.5" x2="1098" y2="134.5" stroke="#444" stroke-width="1"/>
<line x1="1090" y1="134.5" x2="1090" y2="143.5" stroke="#888" stroke-width="1.2"/>
<line x1="1111.5" y1="128.5" x2="1125" y2="142" stroke="#444" stroke-width="1"/>
<line x1="1125" y1="128.5" x2="1111.5" y2="142" stroke="#444" stroke-width="1"/>
<path d="M1134.5,143.8 L1138.2,140.2 M1137.2,138.8 L1147.8,128.2 L1150.8,131.2 L1140.2,141.8 Z" fill="none" stroke="#444" stroke-width="1"/>
<rect x="-2" y="820.5" width="17" height="25" fill="#f0f0f0" stroke="#cfcfcf" stroke-width="1"/>
<rect x="0" y="832" width="10" height="2" fill="#111"/><rect x="3" y="827" width="2" height="12" fill="#111"/>
</svg>
</body></html>
